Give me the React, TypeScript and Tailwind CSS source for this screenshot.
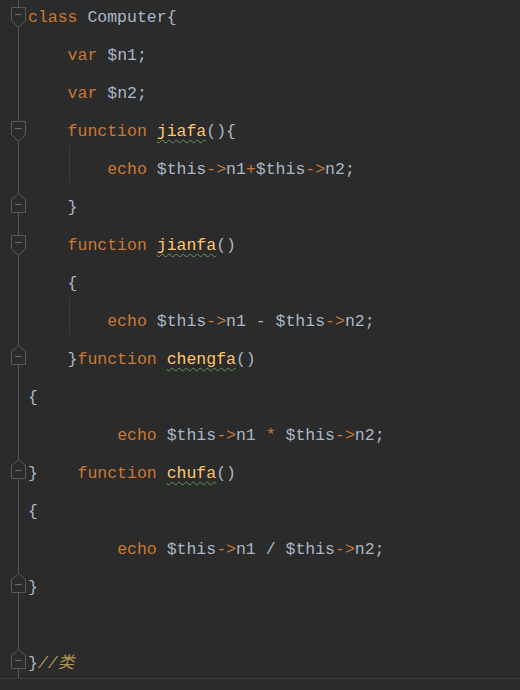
import React from "react";

const K = "text-[#cc7832]";
const T = "text-[#a9b7c6]";
const F =
  "text-[#ffc66d] underline decoration-wavy decoration-[#629755] decoration-1 underline-offset-[3px]";
const C = "text-[#b39650] italic";

type Tok = [string, string];
type Line = { toks: Tok[]; fold?: "start" | "end"; guide?: boolean };

const sp = (n: number): Tok => [" ".repeat(n), T];

const lines: Line[] = [
  { toks: [["class", K], [" Computer{", T]], fold: "start" },
  { toks: [sp(4), ["var", K], [" $n1;", T]] },
  { toks: [sp(4), ["var", K], [" $n2;", T]] },
  { toks: [sp(4), ["function", K], [" ", T], ["jiafa", F], ["(){", T]], fold: "start" },
  {
    toks: [sp(8), ["echo", K], [" $this", T], ["->", K], ["n1", T], ["+", K], ["$this", T], ["->", K], ["n2;", T]],
    guide: true,
  },
  { toks: [["    }", T]], fold: "end" },
  { toks: [sp(4), ["function", K], [" ", T], ["jianfa", F], ["()", T]], fold: "start" },
  { toks: [["    {", T]] },
  {
    toks: [sp(8), ["echo", K], [" $this", T], ["->", K], ["n1 - $this", T], ["->", K], ["n2;", T]],
    guide: true,
  },
  { toks: [["    }", T], ["function", K], [" ", T], ["chengfa", F], ["()", T]], fold: "end" },
  { toks: [["{", T]] },
  { toks: [sp(9), ["echo", K], [" $this", T], ["->", K], ["n1 ", T], ["*", K], [" $this", T], ["->", K], ["n2;", T]] },
  { toks: [["}    ", T], ["function", K], [" ", T], ["chufa", F], ["()", T]], fold: "end" },
  { toks: [["{", T]] },
  { toks: [sp(9), ["echo", K], [" $this", T], ["->", K], ["n1 / $this", T], ["->", K], ["n2;", T]] },
  { toks: [["}", T]], fold: "end" },
  { toks: [] },
  { toks: [["}", T], ["//类", C]], fold: "end" },
];

function FoldStart() {
  return (
    <svg width="17" height="22" viewBox="0 0 17 22" className="absolute left-[10px] top-[10px]">
      <path d="M1.5 0.5 H15.5 V13.5 L8.5 20.5 L1.5 13.5 Z" fill="#2b2b2b" stroke="#5a5a5a" strokeWidth="1" />
      <path d="M5 7.5 H12" stroke="#6a6a6a" strokeWidth="1" />
    </svg>
  );
}

function FoldEnd() {
  return (
    <svg width="17" height="21" viewBox="0 0 17 21" className="absolute left-[10px] top-[6px]">
      <path d="M8.5 0.5 L15.5 6.5 V19.5 H1.5 V6.5 Z" fill="#2b2b2b" stroke="#5a5a5a" strokeWidth="1" />
      <path d="M5 11.5 H12" stroke="#6a6a6a" strokeWidth="1" />
    </svg>
  );
}

export default function App() {
  return (
    <div className="w-[520px] h-[690px] bg-[#2b2b2b] overflow-hidden flex flex-col">
      <div className="h-[678px] overflow-hidden">
        <div className="-mt-[3px] flex flex-col">
          {lines.map((ln, i) => (
            <div key={i} className="flex h-[38px]">
              <div className="relative w-[28px] h-[38px] shrink-0">
                <div className="absolute left-[18px] top-0 bottom-0 w-px bg-[#555555]" />
                {ln.fold === "start" && <FoldStart />}
                {ln.fold === "end" && <FoldEnd />}
              </div>
              <div
                className="relative flex-1 whitespace-pre pt-[2px] leading-[38px] text-[16.5px]"
                style={{ fontFamily: '"Liberation Mono", "Noto Sans CJK SC", monospace' }}
              >
                {ln.guide && <div className="absolute left-[41px] -top-[4px] h-[38px] w-px bg-[#3f3f3f]" />}
                {ln.toks.map((t, j) => (
                  <span key={j} className={t[1]}>
                    {t[0]}
                  </span>
                ))}
              </div>
            </div>
          ))}
        </div>
      </div>
      <div className="border-t border-[#3a3a3a] flex-1" />
    </div>
  );
}
